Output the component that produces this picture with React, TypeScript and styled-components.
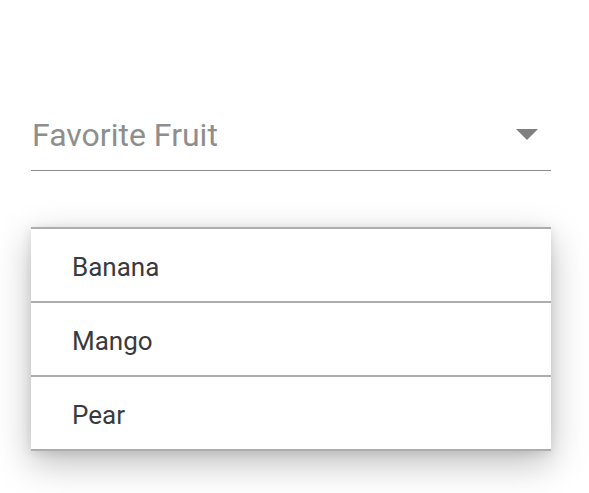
import React from "react"
import styled, { createGlobalStyle } from "styled-components"

const GlobalStyle = createGlobalStyle`
  html, body {
    margin: 0;
    padding: 0;
    background: #ffffff;
  }

  body {
    font-family: Roboto, "Liberation Sans", sans-serif;
  }
`

const Page = styled.div`
  width: 589px;
  height: 493px;
  padding: 115px 0 0 31px;
  box-sizing: border-box;
  overflow: hidden;
`

const Field = styled.div`
  display: flex;
  align-items: center;
  justify-content: space-between;
  width: 520px;
  padding-bottom: 15px;
  border-bottom: 1px solid #8c8c8c;
`

const Label = styled.span`
  font-size: 32px;
  line-height: 40px;
  color: #8e8e8e;
  padding-left: 1px;
`

const Arrow = styled.svg`
  margin-right: 13px;
  margin-bottom: 2px;
`

const Menu = styled.ul`
  list-style: none;
  margin: 56px 0 0;
  padding: 0;
  width: 520px;
  background: #ffffff;
  border-top: 2px solid #adadad;
  box-shadow: 0 12px 34px rgba(0, 0, 0, 0.26), 0 2px 10px rgba(0, 0, 0, 0.1);
`

const Item = styled.li`
  height: 68px;
  padding: 4px 0 0 41px;
  line-height: 68px;
  font-size: 26px;
  color: #3a3a3e;
  border-bottom: 2px solid #adadad;
`

const fruits = ["Banana", "Mango", "Pear"]

const App = () => {
  return (
    <Page>
      <GlobalStyle />
      <Field>
        <Label>Favorite Fruit</Label>
        <Arrow width="22" height="11" viewBox="0 0 22 11">
          <path d="M0 0 L22 0 L11 11 Z" fill="#7f7f7f" />
        </Arrow>
      </Field>

      <Menu>
        {fruits.map((fruit) => (
          <Item key={fruit}>{fruit}</Item>
        ))}
      </Menu>
    </Page>
  )
}

export default App
